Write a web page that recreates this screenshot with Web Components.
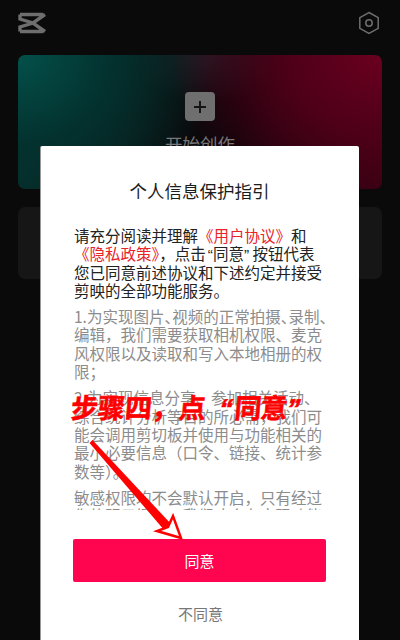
<!DOCTYPE html>
<html lang="zh">
<head>
<meta charset="utf-8">
<style>
  html, body { margin: 0; height: 100%; background: #0a0a0b; overflow: hidden; }
  body { font-family: "Noto Sans CJK SC", "Liberation Sans", sans-serif; }
</style>
</head>
<body>
<home-screen>
  <privacy-dialog>
    <span slot="title">个人信息保护指引</span>
  </privacy-dialog>
</home-screen>
<step-note></step-note>

<script>
class HomeScreen extends HTMLElement {
  constructor() {
    super();
    this.attachShadow({ mode: "open" });
    this.shadowRoot.innerHTML = `
    <style>
    :host { display: block; position: relative; width: 400px; height: 640px; overflow: hidden; background: #0a0a0b; }
    .bar { display: flex; justify-content: space-between; align-items: flex-start; height: 55px; padding: 11px 18px 0; box-sizing: border-box; }
    .bar svg { display: block; }
    .cards { display: flex; flex-direction: column; gap: 18px; padding: 0 18px; }
    .hero {
      height: 134px; border-radius: 7px; display: flex; flex-direction: column; align-items: center;
      background:
        radial-gradient(58% 130% at 100% 0%, #6a0020 0%, #500019 42%, rgba(40,0,14,0) 100%),
        radial-gradient(54% 140% at 0% 0%, #04504a 0%, #03312e 48%, rgba(3,30,28,0) 100%),
        radial-gradient(22% 35% at 52% 0%, #1e1c24 0%, rgba(30,28,36,0) 100%),
        linear-gradient(90deg, #082c29 0%, #0a0a0c 45%, #0a0408 60%, #300010 100%);
    }
    .plus { margin-top: 37px; width: 30px; height: 29px; border-radius: 4px; background: #6f6f6f; display: flex; align-items: center; justify-content: center; }
    .start { margin-top: 11px; font-size: 17.5px; line-height: 24px; color: #777; }
    .drafts { height: 72px; border-radius: 7px; background: #161616; }
    </style>
    <div class="bar">
      <svg width="30" height="24" viewBox="0 0 30 24" fill="none" stroke="#6e6e6e" stroke-width="3.4" style="margin-left:-1px">
        <path d="M3 3.5 H26 M3 20.5 H26 M3 3.5 V8 L16 12 L28 20.5 M3 20.5 V16 L16 12 L28 3.5"/>
      </svg>
      <svg width="22" height="24" viewBox="0 0 22 24" fill="none" stroke="#6e6e6e" stroke-width="1.5" style="margin-right:2px">
        <path d="M11 1.5 L20.2 6.7 V17.3 L11 22.5 L1.8 17.3 V6.7 Z"/>
        <circle cx="11" cy="12" r="3.2"/>
      </svg>
    </div>
    <div class="cards">
      <div class="hero">
        <div class="plus">
          <svg width="14" height="14" viewBox="0 0 14 14" stroke="#151515" stroke-width="2"><path d="M1 7 H13 M7 1 V13"/></svg>
        </div>
        <div class="start">开始创作</div>
      </div>
      <div class="drafts"></div>
    </div>
    <slot></slot>`;
  }
}

class PrivacyDialog extends HTMLElement {
  constructor() {
    super();
    this.attachShadow({ mode: "open" });
    const lines = (rows) => rows.map((r) => `<span class="line">${r}</span>`).join("");
    this.shadowRoot.innerHTML = `
    <style>
    :host {
      position: absolute; left: 40px; top: 146px; width: 319px; height: 494px; box-sizing: border-box;
      display: flex; flex-direction: column; background: #fff; border-left: 1px solid #999; border-radius: 2px 2px 0 0; padding: 0 32px 0 33px;
    }
    h2 { margin: 32px 0 0; text-align: center; font-size: 17.5px; line-height: 26px; font-weight: 400; color: #1c1c1c; transform: translateX(-1px); }
    .scroll { margin-top: 22px; height: 284px; overflow: hidden; font-size: 15.5px; color: #8c8c8c; }
    p { margin: 0 0 8px; }
    .line { display: block; height: 18.3px; line-height: 18px; white-space: nowrap; }
    .lead { color: #222; }
    .lead b { font-weight: 400; color: #e8232a; }
    .q { font-family: "Liberation Sans", sans-serif; }
    .q.open { margin-left: 2px; }
    .h { font-feature-settings: "halt"; }
    .agree { margin: 29px 1px 0 -1px; height: 43px; border-radius: 2px; background: #ff0550; color: #fff; font-size: 15px; display: flex; align-items: center; justify-content: center; }
    .decline { margin-top: 21px; text-align: center; font-size: 15px; line-height: 22px; color: #777; }
    </style>
    <h2><slot name="title"></slot></h2>
    <div class="scroll">
      <p class="lead">${lines([
        "请充分阅读并理解<b>《用户协议》</b>和",
        '<b>《隐私政策》</b>，点击<span class="q open">“</span>同意<span class="q">”</span> 按钮代表',
        "您已同意前述协议和下述约定并接受",
        "剪映的全部功能服务。",
      ])}</p>
      <p>${lines([
        '<span class="h">1.为实现图片、视频的正常拍摄、录制、</span>',
        "编辑，我们需要获取相机权限、麦克",
        "风权限以及读取和写入本地相册的权",
        "限；",
      ])}</p>
      <p>${lines([
        "2.为实现信息分享、参加相关活动、",
        "综合统计分析等目的所必需，我们可",
        "能会调用剪切板并使用与功能相关的",
        "最小必要信息（口令、链接、统计参",
        "数等）。",
      ])}</p>
      <p>${lines([
        "敏感权限均不会默认开启，只有经过",
        "您的明示授权，我们才会在实现功能",
      ])}</p>
    </div>
    <div class="agree">同意</div>
    <div class="decline">不同意</div>`;
  }
}

class StepNote extends HTMLElement {
  constructor() {
    super();
    this.attachShadow({ mode: "open" });
    this.shadowRoot.innerHTML = `
    <style>
    :host { position: absolute; left: 0; top: 0; width: 400px; height: 640px; pointer-events: none; display: block; }
    .label { position: absolute; left: 71px; top: 388px; font-size: 27px; line-height: 38px; font-weight: 700; color: #f00; white-space: nowrap; -webkit-text-stroke: .6px #f00; transform: skewX(-5deg); }
    .q { font-family: "Liberation Sans", sans-serif; font-style: italic; }
    .open { margin: 0 2px 0 13px; }
    .word { letter-spacing: -1px; }
    svg { position: absolute; left: 0; top: 0; }
    </style>
    <div class="label">步骤四，点<span class="q open">“</span><span class="word">同意</span><span class="q">”</span></div>
    <svg width="400" height="640" viewBox="0 0 400 640">
      <path d="M89.5 443 L92.5 440 L172 525 L165 531 Z" fill="#f00"/>
      <path d="M181 538 L157 531 L168 527 L173 516 Z" fill="#fff" stroke="#f00" stroke-width="2.5"/>
    </svg>`;
  }
}

customElements.define("home-screen", HomeScreen);
customElements.define("privacy-dialog", PrivacyDialog);
customElements.define("step-note", StepNote);
</script>
</body>
</html>
